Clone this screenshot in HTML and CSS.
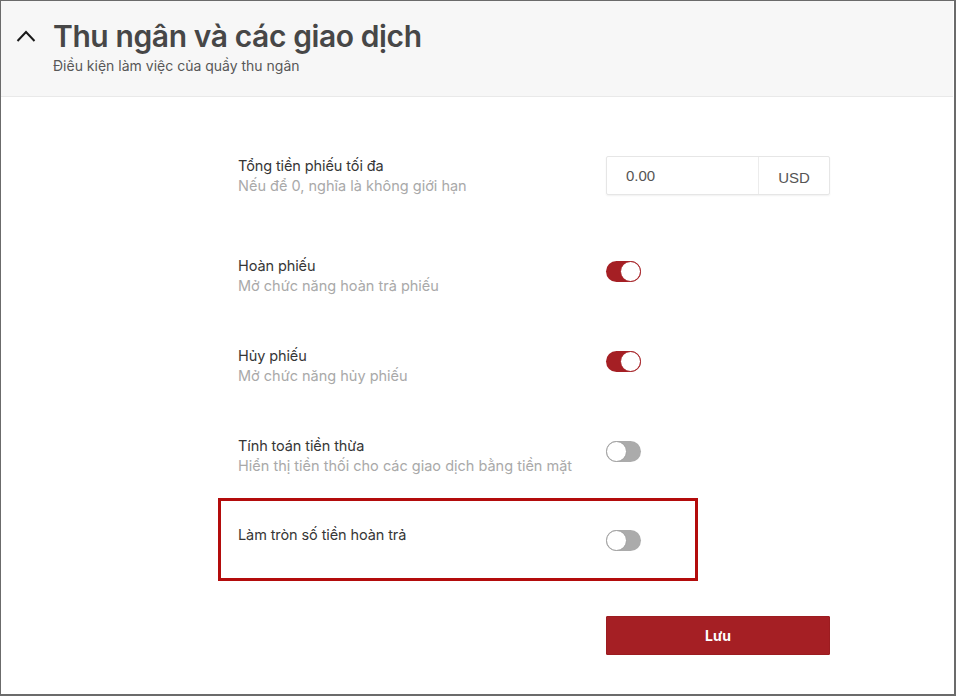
FILE: index.html
```html
<!DOCTYPE html>
<html lang="vi">
<head>
<meta charset="utf-8">
<title>Thu ngân và các giao dịch</title>
<link rel="stylesheet" href="styles.css">
</head>
<body>
<div class="frame">
  <header class="head">
    <svg class="chev" width="20" height="12" viewBox="0 0 20 12"><polyline points="1.5,11 10,2 18.5,11" fill="none" stroke="#1a1a1a" stroke-width="2"/></svg>
    <div class="head-text">
      <h1 class="title">Thu ngân và các giao dịch</h1>
      <p class="subtitle">Điều kiện làm việc của quầy thu ngân</p>
    </div>
  </header>
  <main class="content">
    <div class="settings">
      <div class="row row-first">
        <div class="label">
          <div class="name">Tổng tiền phiếu tối đa</div>
          <div class="hint">Nếu để 0, nghĩa là không giới hạn</div>
        </div>
        <div class="input-group">
          <span class="input-value">0.00</span>
          <span class="addon">USD</span>
        </div>
      </div>
      <div class="row">
        <div class="label">
          <div class="name">Hoàn phiếu</div>
          <div class="hint">Mở chức năng hoàn trả phiếu</div>
        </div>
        <span class="toggle on"><span class="knob"></span></span>
      </div>
      <div class="row">
        <div class="label">
          <div class="name">Hủy phiếu</div>
          <div class="hint">Mở chức năng hủy phiếu</div>
        </div>
        <span class="toggle on"><span class="knob"></span></span>
      </div>
      <div class="row row-short">
        <div class="label">
          <div class="name">Tính toán tiền thừa</div>
          <div class="hint">Hiển thị tiền thối cho các giao dịch bằng tiền mặt</div>
        </div>
        <span class="toggle"><span class="knob"></span></span>
      </div>
      <div class="row highlight">
        <div class="label">
          <div class="name">Làm tròn số tiền hoàn trả</div>
        </div>
        <span class="toggle"><span class="knob"></span></span>
      </div>
      <div class="actions">
        <button class="save" type="button">Lưu</button>
      </div>
    </div>
  </main>
</div>
</body>
</html>
```

FILE: styles.css
```css
* { box-sizing: border-box; }
html, body { margin: 0; padding: 0; background: #ffffff; }
body { font-family: Inter, "Noto Sans", sans-serif; }

.frame {
  width: 956px;
  height: 696px;
  border: 1px solid #6b6b6b;
  border-right-width: 2px;
  border-bottom-width: 2px;
  background: #ffffff;
  overflow: hidden;
}

.head {
  height: 96px;
  background: #f7f7f7;
  border-bottom: 1px solid #e9e9e9;
  display: flex;
  align-items: flex-start;
  padding: 17px 0 0 15px;
  margin-right: 1px;
}
.chev { margin-top: 12px; margin-right: 17px; flex: none; }
.title {
  margin: 0;
  font-size: 30px;
  line-height: 36px;
  font-weight: 600;
  color: #474747;
  letter-spacing: -0.4px;
}
.subtitle {
  margin: 2px 0 0 0;
  font-size: 14px;
  line-height: 20px;
  color: #585858;
}

.content { padding: 59px 0 0 237px; }
.settings { width: 592px; }

.row {
  display: grid;
  grid-template-columns: 368px 224px;
  align-items: start;
  height: 90px;
}
.row-first { height: 100px; }
.row-short { height: 62px; }

.label { font-size: 14.5px; line-height: 20px; }
.name { color: #363636; letter-spacing: -0.1px; }
.hint { color: #a9a9a9; }

.input-group {
  display: flex;
  height: 39px;
  border: 1px solid #e6e6e6;
  border-radius: 2px;
  box-shadow: 0 1px 2px rgba(0,0,0,0.06);
  font-family: "Liberation Sans", Arial, sans-serif;
  font-size: 15px;
  color: #555555;
}
.input-value { flex: 1; padding: 10px 0 0 19px; }
.addon {
  width: 71px;
  border-left: 1px solid #ececec;
  display: flex;
  align-items: center;
  justify-content: center;
  padding-top: 4px;
}

.toggle {
  position: relative;
  display: block;
  width: 35px;
  height: 21px;
  margin-top: 5px;
  border-radius: 11px;
  background: #ababab;
}
.toggle.on { background: #a51f24; }
.knob {
  position: absolute;
  top: 0;
  left: 0;
  width: 21px;
  height: 21px;
  border-radius: 50%;
  background: #ffffff;
  border: 1px solid #a0a0a0;
}
.toggle.on .knob { left: auto; right: 0; border-color: #a51f24; }

.highlight {
  margin-left: -20px;
  width: 480px;
  height: 83px;
  border: 3px solid #b30c0c;
  padding: 24px 0 0 17px;
  grid-template-columns: 368px 36px;
}

.actions { margin-top: 35px; padding-left: 368px; }
.save {
  display: block;
  width: 224px;
  height: 39px;
  border: 1px solid #9c1c20;
  border-radius: 1px;
  background: #a51f24;
  color: #ffffff;
  font-family: Inter, "Noto Sans", sans-serif;
  font-size: 14px;
  font-weight: 700;
  cursor: pointer;
}
```
